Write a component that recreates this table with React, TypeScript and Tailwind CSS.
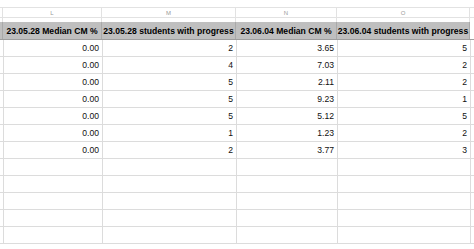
import React from "react";

const cols = [
  { key: "K", w: "w-[3px]" },
  { key: "L", w: "w-[99px]" },
  { key: "M", w: "w-[134px]" },
  { key: "N", w: "w-[101px]" },
  { key: "O", w: "w-[133px]" },
];

const headers = [
  "23.05.28 Median CM %",
  "23.05.28 students with progress",
  "23.06.04 Median CM %",
  "23.06.04 students with progress",
];

const rows: string[][] = [
  ["0.00", "2", "3.65", "5"],
  ["0.00", "4", "7.03", "2"],
  ["0.00", "5", "2.11", "2"],
  ["0.00", "5", "9.23", "1"],
  ["0.00", "5", "5.12", "5"],
  ["0.00", "1", "1.23", "2"],
  ["0.00", "2", "3.77", "3"],
  ["", "", "", ""],
  ["", "", "", ""],
  ["", "", "", ""],
  ["", "", "", ""],
  ["", "", "", ""],
];

export default function App() {
  return (
    <div
      className="w-[474px] h-[249px] overflow-hidden bg-white text-black"
      style={{ fontFamily: '"Liberation Sans", Arial, sans-serif' }}
    >
      <div className="h-[7px]" />
      {/* column letters */}
      <div className="flex h-[11px] border-y border-[#e2e2e2]">
        {cols.map((c) => (
          <div
            key={c.key}
            className={`${c.w} shrink-0 border-r border-[#e2e2e2] flex items-center justify-center text-[6px] text-[#999] leading-none`}
          >
            {c.key === "K" ? "" : c.key}
          </div>
        ))}
        <div className="flex-1" />
      </div>
      <div className="flex h-[4px]">
        {cols.map((c) => (
          <div key={c.key} className={`${c.w} shrink-0 border-r border-[#e2e2e2]`} />
        ))}
      </div>
      {/* header row */}
      <div className="flex h-[18px] border-b border-[#9e9e9e]">
        {cols.map((c, i) => (
          <div
            key={c.key}
            className={`${c.w} shrink-0 bg-[#bfbfbf] border-r border-[#a9a9a9] flex items-center justify-center pt-[2px] text-[8.6px] font-bold leading-none whitespace-nowrap`}
          >
            {i === 0 ? "" : headers[i - 1]}
          </div>
        ))}
        <div className="flex-1" />
      </div>
      {/* data rows */}
      {rows.map((r, ri) => (
        <div key={ri} className="flex h-[17px] border-b border-[#dcdcdc]">
          {cols.map((c, i) => (
            <div
              key={c.key}
              className={`${c.w} shrink-0 border-r border-[#dcdcdc] flex items-center justify-end pr-[3px] pt-[1px] text-[8.6px] text-[#111] leading-none`}
            >
              {i === 0 ? "" : r[i - 1]}
            </div>
          ))}
          <div className="flex-1" />
        </div>
      ))}
    </div>
  );
}
